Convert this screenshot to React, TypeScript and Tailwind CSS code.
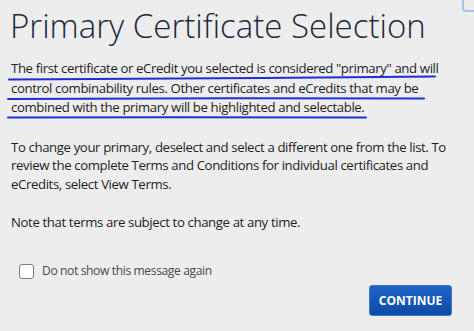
import React from 'react'

const font = { fontFamily: '"Open Sans", "Noto Sans", sans-serif' }

export default function App() {
  return (
    <div className="relative w-[474px] h-[331px] overflow-hidden bg-[#ededed] text-[#222]" style={font}>
      {/* corner of a neighbouring element */}
      <div className="absolute left-[462px] -top-[10px] w-[30px] h-[22px] rounded-[4px] border-2 border-[#a9c4ea]" />

      <h1 className="pl-[10px] pt-[6px] text-[33px] leading-[40px] font-light text-[#1c2a3b] whitespace-nowrap">
        Primary Certificate Selection
      </h1>

      <div className="relative mt-[13px] pl-[11px] text-[13.2px] leading-[19.5px] tracking-[-0.38px] text-[#1e1e1e] whitespace-nowrap">
        <p>The first certificate or eCredit you selected is considered "primary" and will</p>
        <p>control combinability rules. Other certificates and eCredits that may be</p>
        <p>combined with the primary will be highlighted and selectable.</p>
        <svg className="absolute left-0 top-0" width="474" height="70" viewBox="0 0 474 70" fill="none">
          <path d="M9 20.5 C120 20 300 19 435 17.5" stroke="#1f2fd6" strokeWidth="2" strokeLinecap="round" />
          <path d="M8 40 C120 39.5 300 39 424 39.5" stroke="#1f2fd6" strokeWidth="2" strokeLinecap="round" />
          <path d="M8 58.5 C120 58 260 58 366 58.5" stroke="#1f2fd6" strokeWidth="2" strokeLinecap="round" />
        </svg>
      </div>

      <div className="mt-[20px] pl-[11px] text-[13.2px] leading-[18.5px] tracking-[-0.38px] text-[#1e1e1e] whitespace-nowrap">
        <p>To change your primary, deselect and select a different one from the list. To</p>
        <p>review the complete Terms and Conditions for individual certificates and</p>
        <p>eCredits, select View Terms.</p>
      </div>

      <p className="mt-[20px] pl-[11px] text-[13.2px] leading-[19px] tracking-[-0.38px] text-[#1e1e1e] whitespace-nowrap">
        Note that terms are subject to change at any time.
      </p>

      <label className="mt-[30px] pl-[19px] flex items-center gap-[8px] text-[12.1px] tracking-[-0.38px] text-[#4a4a4a] whitespace-nowrap">
        <span className="w-[15px] h-[15px] rounded-[3px] border border-[#7a7a7a] bg-white" />
        Do not show this message again
      </label>

      <div className="flex justify-end pr-[22px] mt-[5px]">
        <button className="w-[83px] h-[31px] rounded-[3px] border border-[#3d78d0] bg-gradient-to-b from-[#2064c8] to-[#0c4aa6] text-white text-[12px] font-bold">
          CONTINUE
        </button>
      </div>
    </div>
  )
}
